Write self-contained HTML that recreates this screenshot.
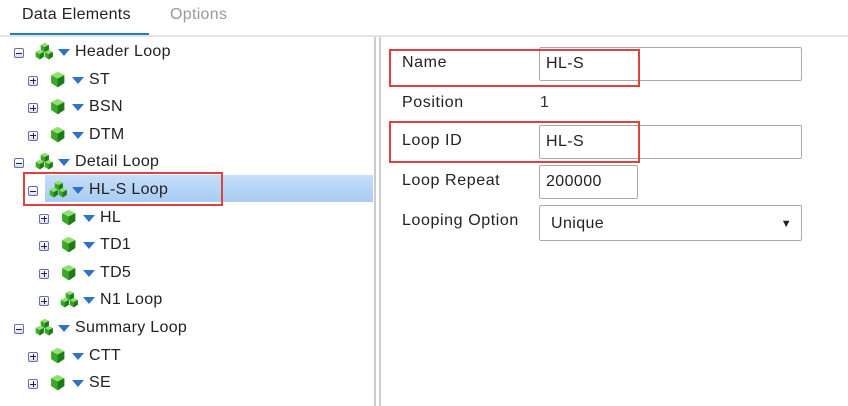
<!DOCTYPE html>
<html><head><style>
*{margin:0;padding:0;box-sizing:border-box}
body{width:848px;height:406px;background:#fff;font-family:"Liberation Sans",sans-serif;color:#222;position:relative;overflow:hidden}
.a{position:absolute}
.tab{font-size:16px;top:6px;letter-spacing:0.3px}
.row{position:absolute;height:24px;font-size:16px;letter-spacing:0.3px;line-height:24px;white-space:nowrap}
.tg{position:absolute;width:10px;height:10px;border:1px solid #6670a8;border-radius:2px;background:linear-gradient(#fff,#dde);top:8px}
.tg:before{content:"";position:absolute;left:1px;top:3.5px;width:6px;height:1px;background:#224}
.tg.p:after{content:"";position:absolute;left:3.5px;top:1px;width:1px;height:6px;background:#224}
.arr{position:absolute;top:9px;width:0;height:0;border-left:6px solid transparent;border-right:6px solid transparent;border-top:7px solid #2f72c8}
.lbl{position:absolute;font-size:16px;letter-spacing:0.6px;color:#222}
.inp{position:absolute;border:1px solid #aaa;border-radius:2px;background:#fff;font-size:16px;letter-spacing:0.4px;padding-left:6px}
.red{position:absolute;border:2px solid #e04040}
</style></head><body>
<div class="a tab" style="left:22px;color:#222">Data Elements</div>
<div class="a tab" style="left:170px;color:#999">Options</div>
<div class="a" style="left:0;top:35px;width:848px;height:2px;background:#e4e4e4"></div>
<div class="a" style="left:10px;top:33px;width:139px;height:2px;background:#1f7fbf"></div>
<div class="a" style="left:374px;top:37px;width:2px;height:369px;background:#ccc"></div>
<div class="a" style="left:379px;top:37px;width:2px;height:369px;background:#ccc"></div>
<div class="a" style="left:45px;top:175px;width:328px;height:27px;background:linear-gradient(#c6defa,#a8ccf2)"></div>
<svg width="0" height="0" style="position:absolute"><defs>
<g id="cube"><path d="M1 3 L7 0 L13 3 L13 10 L7 14 L1 10Z" fill="#3ca82a"/><path d="M1 3 L7 6 L13 3 L7 0Z" fill="#8fe070"/><path d="M7 6 L13 3 L13 10 L7 14Z" fill="#1f7a18"/></g>
<g id="cubes"><use href="#cube" transform="translate(5,0) scale(.68)"/><use href="#cube" transform="translate(0,7) scale(.68)"/><use href="#cube" transform="translate(9,7) scale(.68)"/></g>
</defs></svg>
<div id="tree"></div>
<script>
var rows=[[0,'m',1,'Header Loop'],[1,'p',0,'ST'],[1,'p',0,'BSN'],[1,'p',0,'DTM'],[0,'m',1,'Detail Loop'],[1,'m',1,'HL-S Loop'],[2,'p',0,'HL'],[2,'p',0,'TD1'],[2,'p',0,'TD5'],[2,'p',1,'N1 Loop'],[0,'m',1,'Summary Loop'],[1,'p',0,'CTT'],[1,'p',0,'SE']];
var off=[0,14,25],h='';
rows.forEach(function(r,i){var y=40+i*27.6,o=off[r[0]];
h+='<div class="row" style="left:0;top:'+y+'px;width:370px">'+
'<div class="tg'+(r[1]=='p'?' p':'')+'" style="left:'+(14+o)+'px"></div>'+
'<svg class="a" style="left:'+(35+o)+'px;top:3px" width="19" height="18">'+(r[2]?'<use href="#cubes"/>':'<use href="#cube" transform="translate(1,1) scale(1.1)"/>')+'</svg>'+
'<div class="arr" style="left:'+(58+o)+'px"></div>'+
'<span class="a" style="left:'+(75+o)+'px">'+r[3]+'</span></div>';});
document.getElementById('tree').innerHTML=h;
</script>
<div class="red" style="left:23px;top:172px;width:200px;height:34px"></div>
<div class="lbl" style="left:402px;top:54px">Name</div>
<div class="inp" style="left:539px;top:47px;width:263px;height:34px;line-height:32px">HL-S</div>
<div class="lbl" style="left:402px;top:94px">Position</div>
<div class="lbl" style="left:540px;top:94px;color:#333">1</div>
<div class="lbl" style="left:402px;top:132px">Loop ID</div>
<div class="inp" style="left:539px;top:125px;width:263px;height:34px;line-height:32px">HL-S</div>
<div class="lbl" style="left:402px;top:172px">Loop Repeat</div>
<div class="inp" style="left:539px;top:165px;width:99px;height:34px;line-height:32px">200000</div>
<div class="lbl" style="left:402px;top:212px">Looping Option</div>
<div class="inp" style="left:539px;top:205px;width:263px;height:36px;line-height:36px;padding-left:11px">Unique<span style="position:absolute;right:9px;font-size:11px">▼</span></div>
<div class="red" style="left:389px;top:49px;width:251px;height:38px"></div>
<div class="red" style="left:389px;top:121px;width:251px;height:42px"></div>
</body></html>
